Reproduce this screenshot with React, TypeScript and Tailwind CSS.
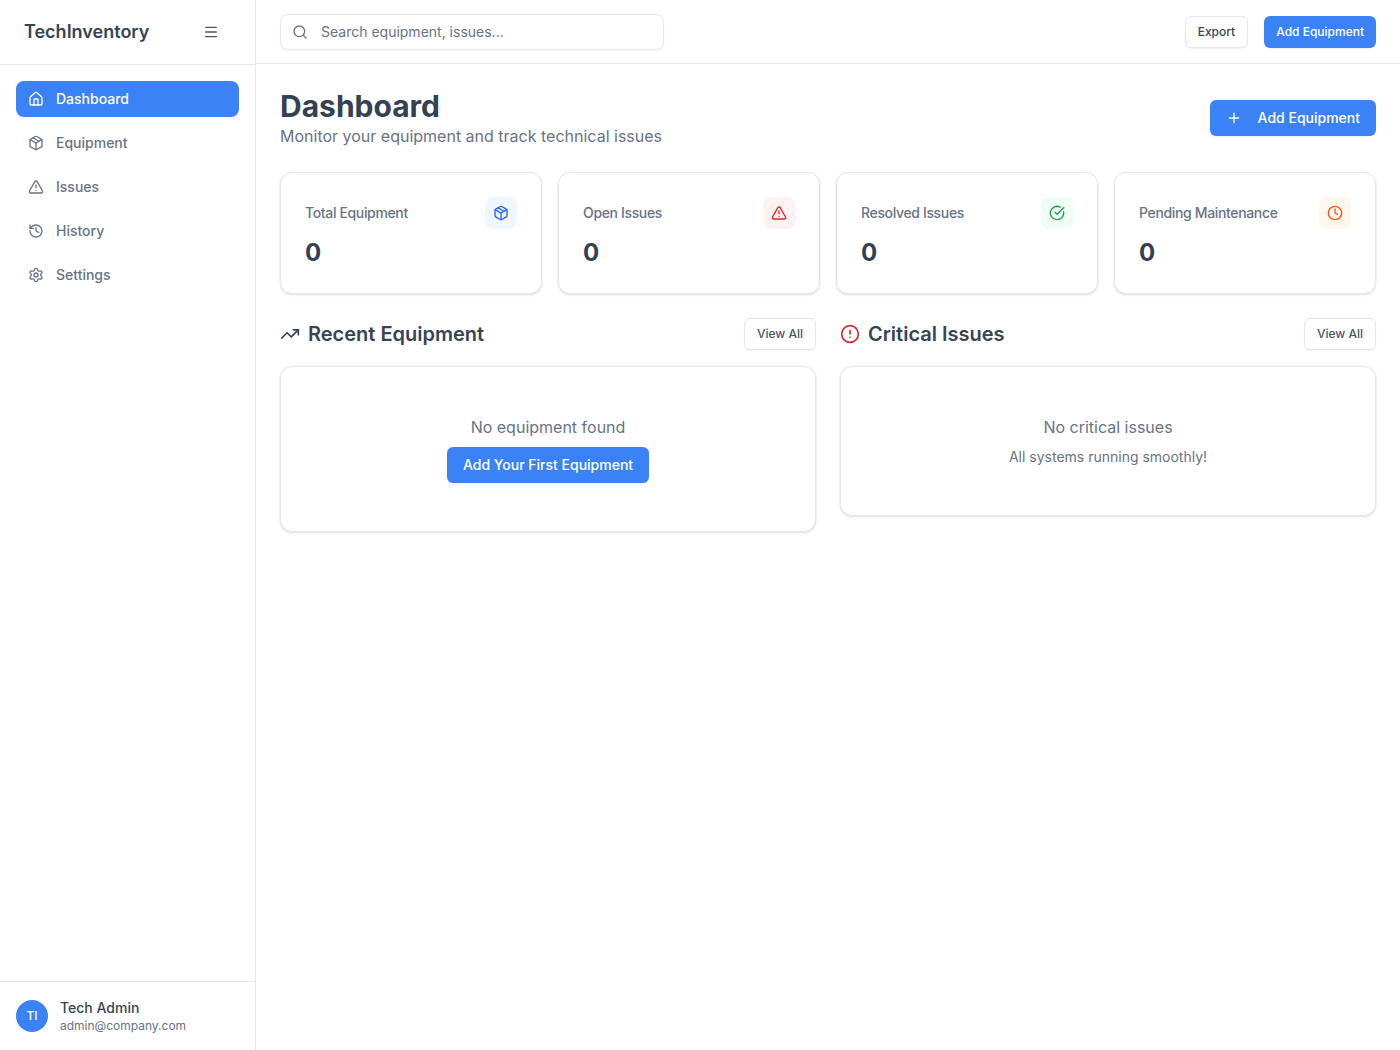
import { House, Package, TriangleAlert, History, Settings, Menu, Search, Plus, TrendingUp, CircleAlert, CircleCheckBig, Clock } from "lucide-react";

const navItems = [
  { label: "Dashboard", Icon: House, active: true },
  { label: "Equipment", Icon: Package, active: false },
  { label: "Issues", Icon: TriangleAlert, active: false },
  { label: "History", Icon: History, active: false },
  { label: "Settings", Icon: Settings, active: false },
];

const stats = [
  { label: "Total Equipment", Icon: Package, box: "bg-[#eff6ff]", color: "text-[#2563eb]" },
  { label: "Open Issues", Icon: TriangleAlert, box: "bg-[#fef2f2]", color: "text-[#dc2626]" },
  { label: "Resolved Issues", Icon: CircleCheckBig, box: "bg-[#f0fdf4]", color: "text-[#16a34a]" },
  { label: "Pending Maintenance", Icon: Clock, box: "bg-[#fff7ed]", color: "text-[#ea580c]" },
];

function ViewAll() {
  return (
    <button className="h-8 px-3 rounded-md border border-[#e5e7eb] bg-white text-xs font-medium text-[#4b5563] shadow-xs">
      View All
    </button>
  );
}

export default function App() {
  return (
    <div className="flex min-h-[1050px] bg-white font-['Inter',sans-serif] text-[#374357]">
      <aside className="w-64 shrink-0 border-r border-[#e5e7eb] flex flex-col bg-white">
        <div className="h-[65px] border-b border-[#e5e7eb] flex items-center justify-between pl-6 pr-[36px]">
          <span className="text-lg font-semibold text-[#374357]">TechInventory</span>
          <Menu size={16} className="text-[#4b5563]" />
        </div>
        <nav className="flex-1 p-4 flex flex-col gap-2">
          {navItems.map(({ label, Icon, active }) => (
            <div
              key={label}
              className={
                active
                  ? "h-9 px-3 rounded-lg flex items-center gap-3 text-sm font-medium bg-[#3b82f6] text-white"
                  : "h-9 px-3 rounded-lg flex items-center gap-3 text-sm font-medium text-[#687387]"
              }
            >
              <Icon size={16} />
              {label}
            </div>
          ))}
        </nav>
        <div className="border-t border-[#e5e7eb] p-4 flex items-center gap-3">
          <div className="w-8 h-8 rounded-full bg-[#3b82f6] text-white text-xs font-medium flex items-center justify-center">TI</div>
          <div className="flex flex-col">
            <span className="text-sm font-medium text-[#374357] leading-5">Tech Admin</span>
            <span className="text-xs text-[#687387] leading-4">admin@company.com</span>
          </div>
        </div>
      </aside>

      <div className="flex-1 min-w-0 flex flex-col">
        <header className="h-16 border-b border-[#e5e7eb] px-6 flex items-center justify-between">
          <div className="w-96 h-9 rounded-lg border border-[#e5e7eb] bg-white shadow-xs flex items-center gap-[13px] px-[11px] text-sm text-[#687387]">
            <Search size={16} />
            <span>Search equipment, issues...</span>
          </div>
          <div className="flex items-center gap-4">
            <button className="h-8 px-3 rounded-md border border-[#e5e7eb] bg-white text-xs font-medium text-[#374357] shadow-xs">Export</button>
            <button className="h-8 px-3 rounded-md bg-[#3b82f6] text-xs font-medium text-white shadow-xs">Add Equipment</button>
          </div>
        </header>

        <main className="p-6">
          <div className="flex items-center justify-between mb-6">
            <div>
              <h1 className="text-3xl leading-9 font-bold text-[#334155]">Dashboard</h1>
              <p className="text-base text-[#687387]">Monitor your equipment and track technical issues</p>
            </div>
            <button className="h-9 px-4 rounded-md bg-[#3b82f6] text-sm font-medium text-white shadow-xs flex items-center gap-4">
              <Plus size={16} />
              Add Equipment
            </button>
          </div>

          <div className="grid grid-cols-4 gap-4 mb-6">
            {stats.map(({ label, Icon, box, color }) => (
              <div key={label} className="rounded-xl border border-[#e5e7eb] bg-white shadow-sm p-6">
                <div className="flex items-center justify-between mb-2">
                  <span className="text-sm font-medium tracking-tight text-[#687387]">{label}</span>
                  <div className={`w-8 h-8 rounded-lg flex items-center justify-center ${box} ${color}`}>
                    <Icon size={16} />
                  </div>
                </div>
                <div className="text-2xl font-bold text-[#334155]">0</div>
              </div>
            ))}
          </div>

          <div className="grid grid-cols-2 gap-6 items-start">
            <section>
              <div className="flex items-center justify-between mb-4">
                <h2 className="flex items-center gap-2 text-xl font-semibold text-[#374357]">
                  <TrendingUp size={20} />
                  Recent Equipment
                </h2>
                <ViewAll />
              </div>
              <div className="rounded-xl border border-[#e5e7eb] bg-white shadow-sm p-6">
                <div className="py-6 flex flex-col items-center gap-2">
                  <p className="text-base text-[#687387]">No equipment found</p>
                  <button className="h-9 px-4 rounded-md bg-[#3b82f6] text-sm font-medium text-white shadow-xs">Add Your First Equipment</button>
                </div>
              </div>
            </section>
            <section>
              <div className="flex items-center justify-between mb-4">
                <h2 className="flex items-center gap-2 text-xl font-semibold text-[#374357]">
                  <CircleAlert size={20} className="text-[#d12b2b]" />
                  Critical Issues
                </h2>
                <ViewAll />
              </div>
              <div className="rounded-xl border border-[#e5e7eb] bg-white shadow-sm p-6">
                <div className="py-6 flex flex-col items-center gap-2">
                  <p className="text-base text-[#687387]">No critical issues</p>
                  <p className="text-sm text-[#687387]">All systems running smoothly!</p>
                </div>
              </div>
            </section>
          </div>
        </main>
      </div>
    </div>
  );
}
